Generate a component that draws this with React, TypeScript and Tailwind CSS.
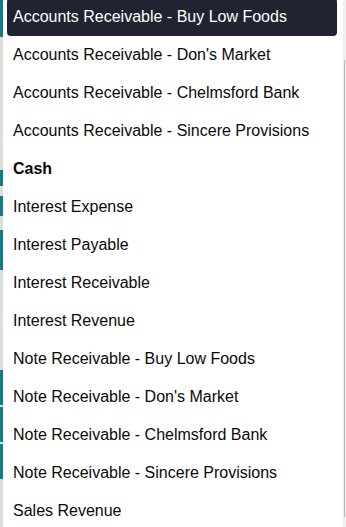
import React from "react";

const items: { label: string; bold?: boolean }[] = [
  { label: "Accounts Receivable - Buy Low Foods" },
  { label: "Accounts Receivable - Don's Market" },
  { label: "Accounts Receivable - Chelmsford Bank" },
  { label: "Accounts Receivable - Sincere Provisions" },
  { label: "Cash", bold: true },
  { label: "Interest Expense" },
  { label: "Interest Payable" },
  { label: "Interest Receivable" },
  { label: "Interest Revenue" },
  { label: "Note Receivable - Buy Low Foods" },
  { label: "Note Receivable - Don's Market" },
  { label: "Note Receivable - Chelmsford Bank" },
  { label: "Note Receivable - Sincere Provisions" },
  { label: "Sales Revenue" },
];

export default function App() {
  return (
    <div
      className="relative w-[346px] h-[527px] overflow-hidden bg-white flex"
      style={{ fontFamily: '"Liberation Sans", Arial, sans-serif' }}
    >
      <div className="w-[3px] h-full bg-[#dcdcdc] flex flex-col">
        <div className="h-[37px] bg-[#0f7d8c]" />
        <div className="h-[133px]" />
        <div className="h-[16px] bg-[#0f7d8c]" />
        <div className="h-[10px]" />
        <div className="h-[20px] bg-[#0f7d8c]" />
        <div className="h-[14px]" />
        <div className="h-[40px] bg-[#0f7d8c]" />
        <div className="h-[100px]" />
        <div className="h-[35px] bg-[#0f7d8c]" />
        <div className="h-[2px]" />
        <div className="h-[35px] bg-[#0f7d8c]" />
        <div className="h-[2px]" />
        <div className="h-[35px] bg-[#0f7d8c]" />
      </div>
      <div className="flex-1 flex flex-col">
        <div className="h-[1px] bg-[#2a8fb0]" />
        <div className="flex-1 flex flex-col mt-[-2px] pl-[4px] pr-[6px]">
          {items.map((it, i) => (
            <div
              key={i}
              className={
                "h-[38px] shrink-0 flex items-center pl-[6px] text-[16px] " +
                (i === 0
                  ? "bg-[#1f2430] text-white rounded-[4px] h-[37px]"
                  : "text-[#0a0a0a]") +
                (it.bold ? " font-bold" : "")
              }
            >
              {it.label}
            </div>
          ))}
        </div>
      </div>
      <div className="w-[3px] h-full bg-[#f0f0f0] flex flex-col">
        <div className="h-[60px]" />
        <div className="h-[457px] ml-[1px] w-[1px] bg-[#b5b5b5]" />
      </div>
    </div>
  );
}
